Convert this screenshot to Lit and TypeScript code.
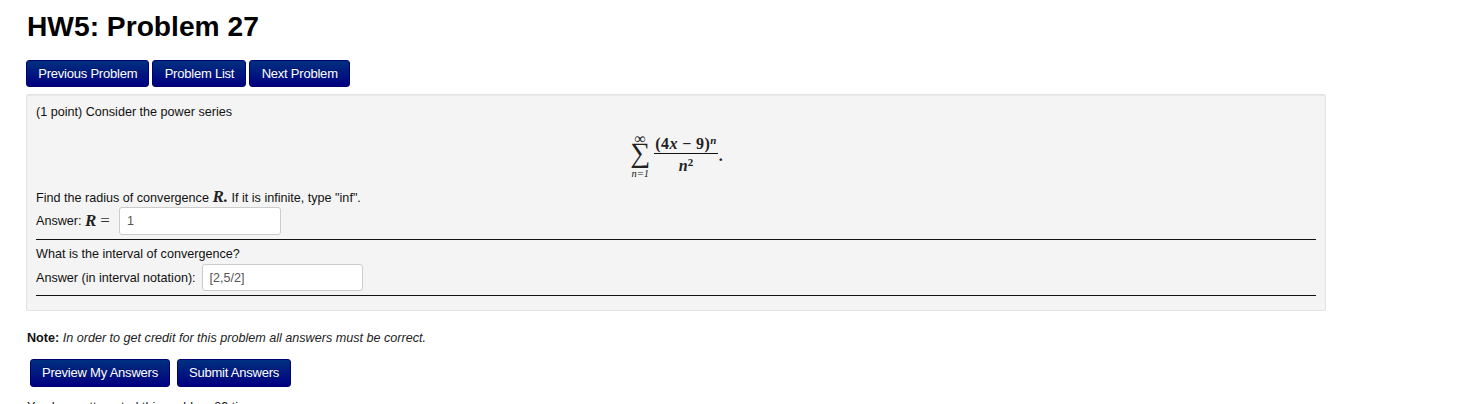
import { LitElement, html, css } from "lit";
import { customElement } from "lit/decorators.js";

@customElement("app-root")
export class AppRoot extends LitElement {
  static styles = css`
    :host { display: block; height: 404px; overflow: hidden; background: #fff; color: #111; font-family: "Liberation Sans", Arial, sans-serif; font-size: 12.6px; }
    .page { padding: 0 0 0 26px; width: 1300px; }
    h1 { margin: 0; padding: 10px 0 0 1px; height: 60px; box-sizing: border-box; font-size: 28.2px; line-height: 32px; font-weight: bold; color: #000; }
    .nav { display: flex; gap: 3px; height: 27px; margin-bottom: 7px; }
    .btn { box-sizing: border-box; height: 27px; padding: 0 11.2px; display: flex; align-items: center; color: #fff; font-size: 13px; letter-spacing: -0.22px; border: 1px solid #00006e; border-radius: 3px; background: linear-gradient(#00307f, #000080); text-shadow: 0 -1px 0 rgba(0,0,0,.25); white-space: nowrap; }
    .well { box-sizing: border-box; height: 217px; background: #f4f4f4; border: 1px solid #e3e3e3; border-radius: 2px; box-shadow: inset 0 1px 1px rgba(0,0,0,.05); padding: 9px 9px 8px; }
    .line { line-height: 16px; height: 16px; }
    .eq { height: 66px; display: flex; justify-content: center; align-items: flex-start; margin-top: 3px; }
    .m { font-family: "Liberation Serif", serif; color: #222; }
    .sum { display: flex; flex-direction: column; align-items: center; width: 22px; }
    .inf { font-size: 16px; height: 9px; line-height: 9px; margin-top: 11px; }
    .sig { font-size: 28px; height: 24px; line-height: 19px; }
    .lim { font-size: 10.5px; line-height: 9px; font-style: italic; margin-top: 2px; }
    .frac { display: flex; flex-direction: column; align-items: center; margin-left: 3px; margin-top: 12px; }
    .num { font-size: 16px; font-weight: bold; letter-spacing: 0.4px; line-height: 18px; height: 18px; padding: 0 1px; border-bottom: 1px solid #111; white-space: nowrap; }
    .den { font-size: 16px; font-weight: bold; font-style: italic; line-height: 16px; padding-top: 4px; }
    sup { font-size: 11px; line-height: 0; font-style: italic; vertical-align: 5px; }
    .den sup { font-style: normal; }
    .dot { font-size: 16px; font-weight: bold; line-height: 18px; margin-top: 24px; margin-left: 1px; }
    i.v { font-style: italic; }
    .r { font-family: "Liberation Serif", serif; font-weight: bold; font-style: italic; font-size: 17px; color: #222; }
    .ans { display: flex; align-items: center; height: 28px; margin-top: 2px; }
    .eqs { font-family: "Liberation Serif", serif; font-size: 17px; margin: 0 9px 0 4px; color: #333; }
    .lbl { margin-right: 6px; }
    .input { box-sizing: border-box; width: 162px; height: 28px; border: 1px solid #ccc; border-radius: 3px; background: #fff; padding: 0 7px; display: flex; align-items: center; color: #555; }
    .short { height: 27px; }
    .short .input { height: 27px; width: 161px; }
    .rule { height: 1px; background: #111; margin: 4px 0 6px; }
    .note { margin: 19px 0 0 1px; line-height: 16px; }
    .note em { color: #222; }
    .act { display: flex; gap: 7px; margin: 13px 0 0 4px; }
    .act .btn { height: 28px; padding: 0 11px 1px; }
    .tail { margin: 12px 0 0 1px; line-height: 16px; }
  `;
  render() {
    return html`<div class="page">
      <h1>HW5: Problem 27</h1>
      <div class="nav">
        <div class="btn">Previous Problem</div><div class="btn">Problem List</div><div class="btn">Next Problem</div>
      </div>
      <div class="well">
        <div class="line">(1 point) Consider the power series</div>
        <div class="eq m">
          <div class="sum"><span class="inf">∞</span><span class="sig">∑</span><span class="lim">n=1</span></div>
          <div class="frac"><div class="num">(4<i class="v">x</i> − 9)<sup>n</sup></div><div class="den">n<sup>2</sup></div></div>
          <div class="dot">.</div>
        </div>
        <div class="line">Find the radius of convergence <span class="r">R.</span> If it is infinite, type "inf".</div>
        <div class="ans"><span>Answer:&nbsp;</span><span class="r">R</span><span class="eqs">=</span><div class="input">1</div></div>
        <div class="rule"></div>
        <div class="line">What is the interval of convergence?</div>
        <div class="ans short"><span class="lbl">Answer (in interval notation):</span><div class="input">[2,5/2]</div></div>
        <div class="rule"></div>
      </div>
      <div class="note"><b>Note:</b> <em>In order to get credit for this problem all answers must be correct.</em></div>
      <div class="act"><div class="btn">Preview My Answers</div><div class="btn">Submit Answers</div></div>
      <div class="tail">You have attempted this problem 89 times.</div>
    </div>`;
  }
}
